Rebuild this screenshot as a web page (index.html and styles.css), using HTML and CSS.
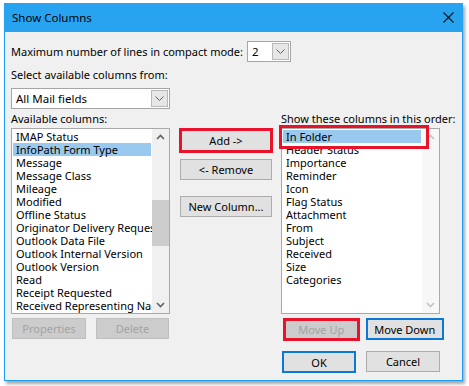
FILE: index.html
```html
<!DOCTYPE html>
<html lang="en">

<head>
    <meta charset="UTF-8">
    <meta name="viewport" content="width=device-width, initial-scale=1.0">
    <title>Show Columns</title>
    <link rel="stylesheet" href="styles.css">
</head>

<body>
    <div class="window">
        <div class="titlebar">
            <span class="title">Show Columns</span>
            <svg class="close" width="11" height="11" viewBox="0 0 11 11">
                <path d="M0.5 0.5 L10.5 10.5 M10.5 0.5 L0.5 10.5" stroke="#111" stroke-width="1.1" fill="none" />
            </svg>
        </div>
        <div class="body">
            <div class="lines-row">
                <span>Maximum number of lines in compact mode:</span>
                <div class="combo combo-small">
                    <span class="combo-text">2</span>
                    <span class="drop">
                        <svg width="9" height="5" viewBox="0 0 9 5"><path d="M0.5 0.5 L4.5 4.5 L8.5 0.5" stroke="#606060" fill="none" /></svg>
                    </span>
                </div>
            </div>
            <div class="label label-select">Select available columns from:</div>
            <div class="combo combo-wide">
                <span class="combo-text">All Mail fields</span>
                <span class="drop">
                    <svg width="9" height="5" viewBox="0 0 9 5"><path d="M0.5 0.5 L4.5 4.5 L8.5 0.5" stroke="#606060" fill="none" /></svg>
                </span>
            </div>

            <div class="columns">
                <div class="col col-left">
                    <div class="label">Available columns:</div>
                    <div class="listbox">
                        <ul class="items">
                            <li>IMAP Status</li>
                            <li class="selected">InfoPath Form Type</li>
                            <li>Message</li>
                            <li>Message Class</li>
                            <li>Mileage</li>
                            <li>Modified</li>
                            <li>Offline Status</li>
                            <li>Originator Delivery Requested</li>
                            <li>Outlook Data File</li>
                            <li>Outlook Internal Version</li>
                            <li>Outlook Version</li>
                            <li>Read</li>
                            <li>Receipt Requested</li>
                            <li>Received Representing Name</li>
                        </ul>
                        <div class="scrollbar">
                            <svg class="arrow" width="17" height="17" viewBox="0 0 17 17"><path d="M5 10 L8.5 6.5 L12 10" stroke="#606060" stroke-width="1.6" fill="none" /></svg>
                            <div class="track"><div class="thumb"></div></div>
                            <svg class="arrow" width="17" height="17" viewBox="0 0 17 17"><path d="M5 7 L8.5 10.5 L12 7" stroke="#606060" stroke-width="1.6" fill="none" /></svg>
                        </div>
                    </div>
                    <div class="btn-row">
                        <button class="btn disabled btn-props">Properties</button>
                        <button class="btn disabled btn-delete">Delete</button>
                    </div>
                </div>

                <div class="col col-mid">
                    <button class="btn btn-mid marked">Add -&gt;</button>
                    <button class="btn btn-mid btn-remove">&lt;- Remove</button>
                    <button class="btn btn-mid btn-new">New Column...</button>
                </div>

                <div class="col col-right">
                    <div class="label nowrap">Show these columns in this order:</div>
                    <div class="listbox listbox-right">
                        <ul class="items">
                            <li class="selected">In Folder</li>
                            <li>Header Status</li>
                            <li>Importance</li>
                            <li>Reminder</li>
                            <li>Icon</li>
                            <li>Flag Status</li>
                            <li>Attachment</li>
                            <li>From</li>
                            <li>Subject</li>
                            <li>Received</li>
                            <li>Size</li>
                            <li>Categories</li>
                        </ul>
                        <div class="scrollbar scrollbar-off">
                            <svg class="arrow" width="17" height="17" viewBox="0 0 17 17"><path d="M5 10 L8.5 6.5 L12 10" stroke="#c4c4c4" stroke-width="1.6" fill="none" /></svg>
                            <div class="track"></div>
                            <svg class="arrow" width="17" height="17" viewBox="0 0 17 17"><path d="M5 7 L8.5 10.5 L12 7" stroke="#c4c4c4" stroke-width="1.6" fill="none" /></svg>
                        </div>
                        <div class="mark-box"></div>
                    </div>
                    <div class="btn-row move-row">
                        <button class="btn disabled marked btn-up">Move Up</button>
                        <button class="btn focused btn-down">Move Down</button>
                    </div>
                    <div class="btn-row ok-row">
                        <button class="btn focused btn-ok">OK</button>
                        <button class="btn btn-cancel">Cancel</button>
                    </div>
                </div>
            </div>
        </div>
    </div>
</body>

</html>
```

FILE: styles.css
```css
* {
    box-sizing: border-box;
}

body {
    margin: 0;
    width: 469px;
    height: 386px;
    background-color: white;
    font-family: "Segoe UI", "Noto Sans", sans-serif;
    font-size: 11px;
    color: black;
    overflow: hidden;
}

.window {
    margin: 3px 0 0 4px;
    width: 459px;
    height: 378px;
    border: 1px solid #1d9cf0;
    border-top: none;
    background-color: #f0f0f0;
    box-shadow: 2px 3px 3px rgba(0, 0, 0, 0.35);
}

.titlebar {
    height: 29px;
    background-color: #28a3f0;
    display: flex;
    align-items: center;
    justify-content: space-between;
    padding: 0 9px 0 8px;
    margin: 0 -1px;
}

.title {
    font-size: 11.5px;
    padding-bottom: 1px;
}

.close {
    display: block;
}

.body {
    padding: 9px 0 0 6px;
}

.lines-row {
    display: flex;
    align-items: center;
    height: 21px;
    gap: 4px;
}

.label {
    line-height: 16px;
    height: 16px;
}

.nowrap {
    white-space: nowrap;
}

.label-select {
    margin-top: 5px;
}

.combo {
    display: flex;
    align-items: center;
    justify-content: space-between;
    height: 21px;
    background-color: white;
    border: 1px solid #a6a6a6;
    padding: 0 1px 0 4px;
}

.combo-small {
    width: 44px;
}

.combo-wide {
    width: 159px;
    margin-top: 5px;
}

.combo-text {
    font-size: 11.5px;
}

.drop {
    width: 17px;
    height: 17px;
    background-color: #e6e6e6;
    border: 1px solid #b8b8b8;
    display: flex;
    align-items: center;
    justify-content: center;
}

.columns {
    display: flex;
    margin-top: 2px;
}

.col-left {
    width: 159px;
}

.col-mid {
    width: 94px;
    margin-left: 9px;
    padding-top: 17px;
    display: flex;
    flex-direction: column;
    align-items: flex-start;
}

.col-right {
    width: 163px;
    margin-left: 8px;
}

.listbox {
    position: relative;
    display: flex;
    height: 186px;
    margin-top: 1px;
    background-color: white;
    border: 1px solid #a9a9a9;
}

.items {
    list-style: none;
    margin: 0;
    padding: 1px 1px 0 1px;
    flex: 1;
    min-width: 0;
    overflow: hidden;
}

.items li {
    height: 13px;
    line-height: 13px;
    padding-left: 3px;
    white-space: nowrap;
}

.items li.selected {
    background-color: #99c9ef;
}

.scrollbar {
    width: 17px;
    display: flex;
    flex-direction: column;
    background-color: #f0f0f0;
}

.scrollbar-off {
    background-color: #f7f7f7;
}

.arrow {
    display: block;
}

.track {
    flex: 1;
    position: relative;
}

.thumb {
    position: absolute;
    left: 0;
    right: 0;
    top: 54px;
    height: 46px;
    background-color: #cdcdcd;
}

.listbox-right {
    width: 159px;
}

.mark-box {
    position: absolute;
    left: -3px;
    top: -4px;
    width: 150px;
    height: 24px;
    border: 3px solid #e8132b;
}

.btn {
    font-family: inherit;
    font-size: 11px;
    color: black;
    height: 21px;
    padding: 0;
    background-color: #e1e1e1;
    border: 1px solid #adadad;
    border-radius: 0;
}

.btn.disabled {
    background-color: #cccccc;
    border-color: #bfbfbf;
    color: #a3a3a3;
}

.btn.focused {
    border: 2px solid #0a78d7;
}

.btn.marked {
    border: 3px solid #e8132b;
}

.btn-row {
    display: flex;
    margin-top: 4px;
}

.btn-props {
    width: 74px;
    margin-left: 1px;
}

.btn-delete {
    width: 73px;
    margin-left: 10px;
}

.btn-mid {
    width: 92px;
    margin-left: 1px;
}

.btn-mid.marked {
    width: 94px;
    height: 25px;
    margin-left: 0;
}

.btn-remove {
    margin-top: 6px;
}

.btn-new {
    margin-top: 16px;
}

.btn-up {
    width: 77px;
    height: 23px;
    margin-left: 2px;
}

.btn-down {
    width: 79px;
    height: 22px;
    margin-left: 6px;
}

.ok-row {
    margin-top: 10px;
}

.btn-ok {
    width: 74px;
    height: 22px;
    margin-left: 1px;
}

.btn-cancel {
    width: 74px;
    margin-left: 10px;
}
```
